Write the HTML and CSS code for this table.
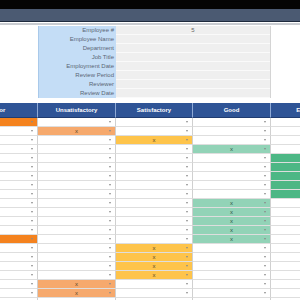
FILE: index.html
```html
<!DOCTYPE html>
<html>
<head>
<meta charset="utf-8">
<link rel="stylesheet" href="styles.css">
</head>
<body>
<div class="topbar"></div>
<div class="titlebar"></div>
<div class="sep"></div>
<div class="info">
  <div class="lbl">Employee #</div><div class="val">5</div>
  <div class="lbl">Employee Name</div><div class="val"></div>
  <div class="lbl">Department</div><div class="val"></div>
  <div class="lbl">Job Title</div><div class="val"></div>
  <div class="lbl">Employment Date</div><div class="val"></div>
  <div class="lbl">Review Period</div><div class="val"></div>
  <div class="lbl">Reviewer</div><div class="val"></div>
  <div class="lbl">Review Date</div><div class="val"></div>
</div>
<div class="viewport">
<div class="grid">
  <div class="hd">Poor</div><div class="hd">Unsatisfactory</div><div class="hd">Satisfactory</div><div class="hd">Good</div><div class="hd">Excellent</div>

  <div class="c poor"></div><div class="c"></div><div class="c"></div><div class="c"></div><div class="c"></div>
  <div class="c"></div><div class="c unsat">x</div><div class="c"></div><div class="c"></div><div class="c"></div>
  <div class="c"></div><div class="c"></div><div class="c sat">x</div><div class="c"></div><div class="c"></div>
  <div class="c"></div><div class="c"></div><div class="c"></div><div class="c good">x</div><div class="c"></div>
  <div class="c"></div><div class="c"></div><div class="c"></div><div class="c"></div><div class="c exc">x</div>
  <div class="c"></div><div class="c"></div><div class="c"></div><div class="c"></div><div class="c exc">x</div>
  <div class="c"></div><div class="c"></div><div class="c"></div><div class="c"></div><div class="c exc">x</div>
  <div class="c"></div><div class="c"></div><div class="c"></div><div class="c"></div><div class="c exc">x</div>
  <div class="c"></div><div class="c"></div><div class="c"></div><div class="c"></div><div class="c exc">x</div>
  <div class="c"></div><div class="c"></div><div class="c"></div><div class="c good">x</div><div class="c"></div>
  <div class="c"></div><div class="c"></div><div class="c"></div><div class="c good">x</div><div class="c"></div>
  <div class="c"></div><div class="c"></div><div class="c"></div><div class="c good">x</div><div class="c"></div>
  <div class="c"></div><div class="c"></div><div class="c"></div><div class="c good">x</div><div class="c"></div>
  <div class="c poor"></div><div class="c"></div><div class="c"></div><div class="c good">x</div><div class="c"></div>
  <div class="c"></div><div class="c"></div><div class="c sat">x</div><div class="c"></div><div class="c"></div>
  <div class="c"></div><div class="c"></div><div class="c sat">x</div><div class="c"></div><div class="c"></div>
  <div class="c"></div><div class="c"></div><div class="c sat">x</div><div class="c"></div><div class="c"></div>
  <div class="c"></div><div class="c"></div><div class="c sat">x</div><div class="c"></div><div class="c"></div>
  <div class="c"></div><div class="c unsat">x</div><div class="c"></div><div class="c"></div><div class="c"></div>
  <div class="c"></div><div class="c unsat">x</div><div class="c"></div><div class="c"></div><div class="c"></div>
  <div class="c"></div><div class="c"></div><div class="c"></div><div class="c"></div><div class="c"></div>
</div>
</div>
</body>
</html>
```
FILE: styles.css
```css
html, body {
  margin: 0;
  padding: 0;
  width: 300px;
  height: 300px;
  overflow: hidden;
  background: #ffffff;
  font-family: "Liberation Sans", Arial, sans-serif;
}
.topbar {
  height: 9px;
  background: #050505;
}
.titlebar {
  height: 12px;
  background: #4b5a72;
  border-bottom: 1px solid #1e2a3d;
}
.sep {
  margin-top: 1px;
  height: 0;
  border-top: 2px solid #c9ccd1;
}
.info {
  margin: 1px 0 0 38px;
  width: 232px;
  display: grid;
  grid-template-columns: 78px 154px;
  grid-auto-rows: 9px;
  border-right: 1px solid #d4d4d4;
}
.lbl {
  background: #c4ddf6;
  border-left: 1px solid #a9c9ea;
  color: #5a6675;
  font-size: 6px;
  line-height: 9px;
  text-align: right;
  padding-right: 2px;
  white-space: nowrap;
}
.val {
  background: #efefef;
  border-bottom: 1px solid #fafafa;
  color: #666;
  font-size: 6px;
  line-height: 9px;
  text-align: center;
}
.viewport {
  margin-top: 5px;
  width: 300px;
  overflow: hidden;
}
.grid {
  display: grid;
  grid-template-columns: 78px 78px 77px 78px 78px;
  grid-template-rows: 15px;
  grid-auto-rows: 9px;
  margin-left: -40px;
  width: 389px;
}
.hd {
  background: #2f5496;
  color: #ffffff;
  font-size: 6px;
  font-weight: bold;
  line-height: 15px;
  text-align: center;
  border-right: 1px solid #8ea9d6;
  border-bottom: 1px solid #203c70;
  box-sizing: border-box;
}
.c {
  position: relative;
  box-sizing: border-box;
  border-right: 1px solid #d0d0d0;
  border-bottom: 1px solid #dedede;
  font-size: 6px;
  line-height: 8px;
  text-align: center;
  color: #5a4a2a;
}
.c::after {
  content: "";
  position: absolute;
  right: 4px;
  top: 3px;
  border-left: 1.5px solid transparent;
  border-right: 1.5px solid transparent;
  border-top: 2px solid #8a8a8a;
}
.poor { background: #f4821e; }
.unsat { background: #f6a96d; }
.sat { background: #fec44b; }
.good { background: #92d3b7; color: #2f5a48; }
.exc { background: #4db785; }
```
